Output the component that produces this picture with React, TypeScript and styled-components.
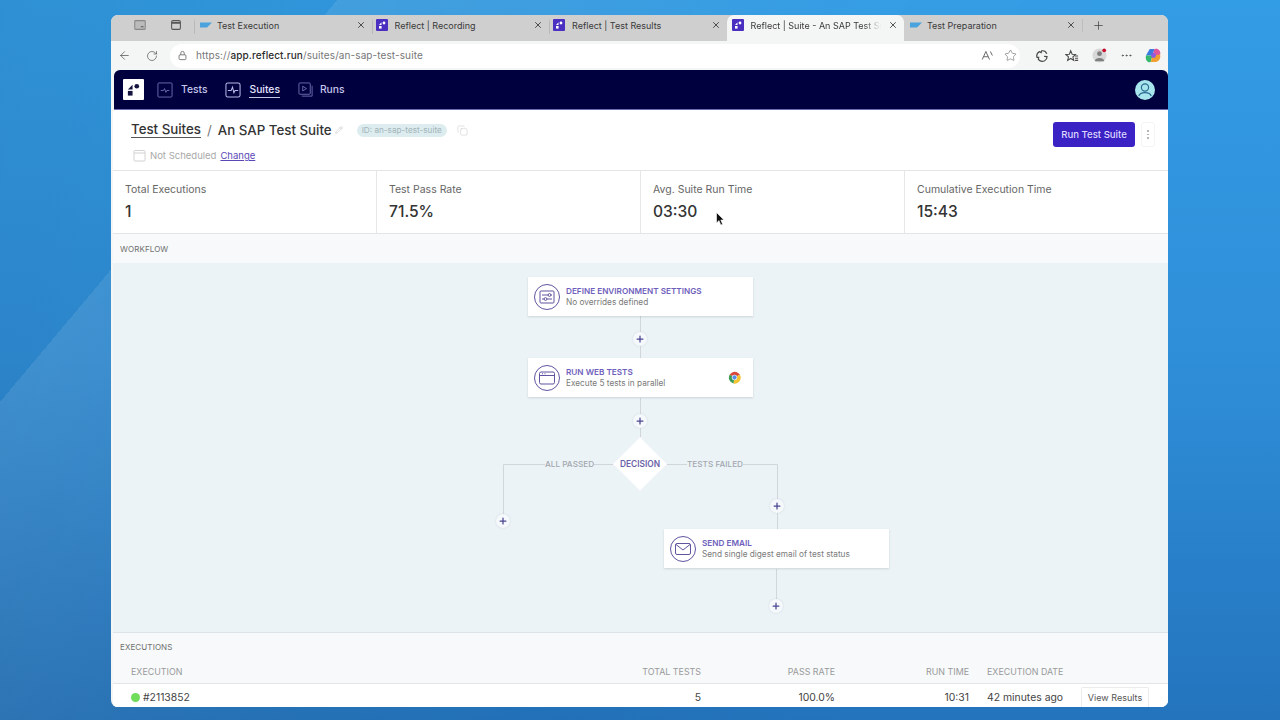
import React from 'react'

import { ArrowLeft, Copy, MoreHorizontal, Pencil, Plus, RotateCw, Star, X } from 'lucide-react'
import styled, { createGlobalStyle } from 'styled-components'

const GlobalStyle = createGlobalStyle`
  html, body {
    margin: 0;
    padding: 0;
    height: 100%;
    overflow: hidden;
    font-family: Inter, "Liberation Sans", sans-serif;
  }
`

const Desktop = styled.div`
  width: 1280px;
  height: 720px;
  box-sizing: border-box;
  padding: 15px 112px 13px 111px;
  background:
    linear-gradient(130deg, transparent 17.9%, rgba(255, 255, 255, 0.09) 17.9%, rgba(255, 255, 255, 0.02) 45%, transparent 60%),
    linear-gradient(90deg, rgba(0, 0, 0, 0.07), transparent 70%),
    linear-gradient(180deg, #329ce4 0%, #2f8ed8 50%, #2374bd 100%);
`

const Window = styled.div`
  height: 100%;
  display: flex;
  flex-direction: column;
  background: #f4f5f5;
  border-radius: 7px;
  overflow: hidden;
`

const TabBar = styled.div`
  height: 26px;
  flex: none;
  padding-left: 11px;
  display: flex;
  align-items: center;
  background: #cfcfcf;
`

const TabBarTool = styled.div`
  width: 36px;
  height: 26px;
  box-sizing: border-box;
  padding-bottom: 6px;
  flex: none;
  display: flex;
  align-items: center;
  justify-content: center;
  color: #555;
`

const Tab = styled.div<{ $active?: boolean; $sap?: boolean; $divider?: boolean }>`
  width: 177.5px;
  height: 26px;
  flex: none;
  box-sizing: border-box;
  padding: 0 6px 6px ${(p) => (p.$sap ? 6 : p.$active ? 5 : 4)}px;
  display: flex;
  align-items: center;
  gap: ${(p) => (p.$sap ? 5 : 7)}px;
  color: #3a3a3a;
  font-size: 9px;
  border-radius: 7px 7px 0 0;
  background-color: ${(p) => (p.$active ? '#f4f5f5' : 'transparent')};
  background-image: ${(p) => (p.$divider ? 'linear-gradient(#b9b9b9, #b9b9b9)' : 'none')};
  background-position: 0 2px;
  background-size: 1px 17px;
  background-repeat: no-repeat;
`

const TabTitle = styled.span<{ $fade?: boolean }>`
  flex: 1;
  min-width: 0;
  white-space: nowrap;
  overflow: hidden;
  mask-image: ${(p) => (p.$fade ? 'linear-gradient(90deg, #000 86%, transparent)' : 'none')};
`

const NewTab = styled.div`
  margin-bottom: 6px;
  padding-left: 9px;
  color: #444;
  display: flex;
  border-left: 1px solid #bdbdbd;
`

const Toolbar = styled.div`
  height: 29px;
  flex: none;
  display: flex;
  align-items: center;
  color: #4a4a4a;
`

const NavButton = styled.div`
  width: 27px;
  flex: none;
  display: flex;
  justify-content: center;
`

const AddressBox = styled.div`
  width: 850px;
  height: 24px;
  margin-left: 5px;
  flex: none;
  box-sizing: border-box;
  padding: 0 3px 0 7px;
  display: flex;
  align-items: center;
  gap: 8px;
  background: #fff;
  border-radius: 12px;
  color: #666;
`

const Url = styled.div`
  flex: 1;
  padding-bottom: 1px;
  font-size: 10px;
  color: #777;
  letter-spacing: 0.1px;

  b {
    font-weight: 500;
    color: #2b2b2b;
  }
`

const StarSlot = styled.span`
  display: flex;
  margin-left: 2px;
`

const ToolbarIcons = styled.div`
  display: flex;
  align-items: center;
  gap: 12.7px;
  padding-left: 15px;

  & > :first-child {
    margin-right: 3.7px;
  }
`

const AppBar = styled.div`
  height: 39px;
  flex: none;
  margin-left: 3px;
  padding: 0 13px 0 9px;
  display: flex;
  align-items: center;
  background: #00003f;
  border-radius: 6px 6px 0 0;
  border-bottom: 1px solid #6c6cb0;
`

const LogoTile = styled.div`
  width: 21px;
  height: 21px;
  margin-right: 13px;
  display: flex;
  align-items: center;
  justify-content: center;
  background: #fff;
  border-radius: 1px;
`

const NavItem = styled.div<{ $active?: boolean; $gap?: number }>`
  display: flex;
  align-items: center;
  gap: ${(p) => p.$gap ?? 8}px;
  margin-right: 18px;
  color: ${(p) => (p.$active ? '#e6e6ff' : '#c5c5ea')};
  font-size: 10.3px;
  font-weight: 500;

  span {
    border-bottom: 1px solid ${(p) => (p.$active ? '#c5c5ea' : 'transparent')};
    padding: 1px 0 2px;
  }
`

const AppBarEnd = styled.div`
  margin-left: auto;
  display: flex;
`

const Page = styled.div`
  position: relative;
  flex: 1;
  min-height: 0;
  margin-left: 2px;
  display: flex;
  flex-direction: column;
  background: #fff;
`

const SuiteHeader = styled.div`
  height: 61px;
  flex: none;
  box-sizing: border-box;
  padding: 10px 13px 0 18px;
  display: flex;
  justify-content: space-between;
  border-bottom: 1px solid #e3e5e6;
`

const TitleRow = styled.div`
  height: 20px;
  display: flex;
  align-items: center;
  font-size: 13.3px;
  font-weight: 500;
  color: #333;
`

const Crumb = styled.span`
  border-bottom: 1px solid #555;
  line-height: 15px;
`

const Slash = styled.span`
  margin: 0 6px;
  color: #777;
  font-weight: 400;
`

const EditIcon = styled.span`
  margin: 0 14px 0 3px;
  display: flex;
  color: #ccc;
`

const IdChip = styled.span`
  height: 13px;
  padding: 0 5px;
  display: flex;
  align-items: center;
  background: #dcecef;
  color: #a3b4b9;
  font-size: 8.2px;
  font-weight: 400;
  border-radius: 7px;
  margin-right: 10px;
`

const CopyIcon = styled.span`
  display: flex;
  color: #c9c9c9;
`

const ScheduleRow = styled.div`
  margin-top: 9px;
  padding-left: 2px;
  display: flex;
  align-items: center;
  gap: 4px;
  color: #a9a9a9;
  font-size: 9.5px;
`

const ChangeLink = styled.a`
  color: #5a48b8;
  text-decoration: underline;
`

const HeaderActions = styled.div`
  display: flex;
  gap: 6px;
  padding-top: 2px;
`

const RunButton = styled.button`
  width: 82px;
  height: 25px;
  padding: 0;
  border: 0;
  border-radius: 3px;
  background: #3a22c4;
  color: #ded8ff;
  font-family: inherit;
  font-size: 9.6px;
  font-weight: 500;
`

const KebabButton = styled.div`
  width: 14px;
  height: 25px;
  display: flex;
  flex-direction: column;
  align-items: center;
  justify-content: center;
  gap: 2px;
  border: 1px solid #f4f4f4;
  box-sizing: border-box;
  border-radius: 3px;

  i {
    width: 1.5px;
    height: 1.5px;
    background: #a8a8a8;
    border-radius: 50%;
  }
`

const StatsGrid = styled.div`
  height: 63px;
  flex: none;
  display: grid;
  grid-template-columns: repeat(4, 264px);
  border-bottom: 1px solid #e3e5e6;
  box-sizing: border-box;
`

const Stat = styled.div`
  box-sizing: border-box;
  padding: 12px 12px 0;
  border-right: 1px solid #e6e6e6;

  &:last-child {
    border-right: 0;
  }
`

const StatLabel = styled.div`
  font-size: 10.5px;
  line-height: 13px;
  color: #666;
`

const StatValue = styled.div`
  margin-top: 6px;
  font-size: 15.6px;
  line-height: 19px;
  font-weight: 500;
  color: #333;
`

const SectionLabel = styled.div<{ $h: number; $top?: number }>`
  height: ${(p) => p.$h}px;
  flex: none;
  box-sizing: border-box;
  padding: ${(p) => p.$top ?? 0}px 0 0 7px;
  display: flex;
  align-items: center;
  background: #f7f9fa;
  color: #707070;
  font-size: 8px;
  letter-spacing: 0.1px;
`

const Canvas = styled.div`
  position: relative;
  height: 370px;
  flex: none;
  background: #ebf3f6;
  border-bottom: 1px solid #dde3e6;
  box-sizing: border-box;
`

const Wires = styled.svg`
  position: absolute;
  left: 0;
  top: 0;
`

const NodeCard = styled.div<{ $x: number; $y: number }>`
  position: absolute;
  left: ${(p) => p.$x}px;
  top: ${(p) => p.$y}px;
  width: 225px;
  height: 39px;
  box-sizing: border-box;
  padding: 0 6px;
  display: flex;
  align-items: center;
  gap: 6px;
  background: #fff;
  box-shadow: 0 1px 2px rgba(70, 80, 100, 0.18);
`

const NodeRing = styled.div`
  width: 26px;
  height: 26px;
  flex: none;
  box-sizing: border-box;
  display: flex;
  align-items: center;
  justify-content: center;
  border: 1.3px solid #5f55a0;
  border-radius: 50%;
  color: #5f55a0;
`

const NodeText = styled.div`
  flex: 1;
`

const NodeTitle = styled.div`
  font-size: 8.2px;
  line-height: 11px;
  font-weight: 600;
  color: #6f5fbc;
`

const NodeSub = styled.div`
  font-size: 8.25px;
  line-height: 11px;
  color: #7a7a7a;
`

const NodeBadge = styled.div`
  display: flex;
  margin-right: 6px;
`

const AddButton = styled.div<{ $x: number; $y: number }>`
  position: absolute;
  left: ${(p) => p.$x - 7}px;
  top: ${(p) => p.$y - 7}px;
  width: 14px;
  height: 14px;
  display: flex;
  align-items: center;
  justify-content: center;
  background: #f5f9fb;
  border-radius: 50%;
  box-shadow: 0 0 2px rgba(120, 130, 160, 0.25);
  color: #4a4590;
`

const Diamond = styled.div`
  position: absolute;
  left: 508px;
  top: 182px;
  width: 38px;
  height: 38px;
  background: #fff;
  transform: rotate(45deg);
`

const DecisionLabel = styled.div`
  position: absolute;
  left: 487px;
  top: 195px;
  width: 80px;
  text-align: center;
  font-size: 8.4px;
  line-height: 12px;
  font-weight: 600;
  color: #6a62a8;
`

const BranchLabel = styled.div<{ $x: number }>`
  position: absolute;
  left: ${(p) => p.$x}px;
  top: 195px;
  font-size: 8.2px;
  line-height: 12px;
  font-weight: 500;
  color: #a3a7af;
  white-space: nowrap;
`

const TableRow = styled.div<{ $head?: boolean }>`
  height: 23px;
  flex: none;
  box-sizing: border-box;
  padding: ${(p) => (p.$head ? '0 0 1px' : '3px 0 0')};
  display: grid;
  grid-template-columns: 18px 436px 134px 134px 134px 18px 94px 68px;
  align-items: center;
  font-size: ${(p) => (p.$head ? 8.9 : 10.4)}px;
  color: ${(p) => (p.$head ? '#9a9a9a' : '#444')};
  background: ${(p) => (p.$head ? '#f7f9fa' : '#fff')};
  border-bottom: ${(p) => (p.$head ? '1px solid #e3e6e8' : '0')};
  overflow: hidden;
`

const Cell = styled.div<{ $right?: boolean }>`
  text-align: ${(p) => (p.$right ? 'right' : 'left')};
  white-space: nowrap;
`

const ExecutionCell = styled.div`
  display: flex;
  align-items: center;
  gap: 3px;
`

const StatusDot = styled.span`
  width: 9px;
  height: 9px;
  background: #6fdc5a;
  border-radius: 50%;
`

const ViewResults = styled.div`
  align-self: stretch;
  box-sizing: border-box;
  display: flex;
  align-items: center;
  justify-content: center;
  border: 1px solid #ececec;
  border-bottom: 0;
  border-radius: 2px 2px 0 0;
  font-size: 9px;
  color: #555;
`

const Cursor = styled.svg`
  position: absolute;
  left: 603px;
  top: 102px;
`

const ReflectMark = ({ size, color }: { size: number; color: string }) => (
  <svg width={size} height={size} viewBox="0 0 16 16" fill={color}>
    <path d="M2 8 L7 3 V8 Z" />
    <circle cx="11.5" cy="4.5" r="2.5" />
    <rect x="2" y="9.5" width="5" height="5" />
  </svg>
)

const ReflectFavicon = () => (
  <svg width="12" height="12" viewBox="0 0 12 12" style={{ flex: 'none' }}>
    <rect width="12" height="12" rx="1" fill="#4a2fc0" />
    <path d="M3 6 L5.5 3.3 V6 Z" fill="#fff" />
    <circle cx="8" cy="4" r="1.4" fill="#fff" />
    <rect x="3" y="7" width="2.6" height="2.6" fill="#fff" />
  </svg>
)

const SapFavicon = () => (
  <svg width="12" height="12" viewBox="0 0 12 12" style={{ flex: 'none' }}>
    <path d="M0 3.5 H12 L7 8.5 H0 Z" fill="#4aa3dc" />
  </svg>
)

const ChromeIcon = () => (
  <svg width="13" height="13" viewBox="0 0 24 24">
    <path d="M12 12 L3 7 A11 11 0 0 1 22 7 Z" fill="#d9483b" />
    <path d="M12 12 L22 7 A11 11 0 0 1 10 23 Z" fill="#f4c430" />
    <path d="M12 12 L10 23 A11 11 0 0 1 3 7 Z" fill="#3a9b56" />
    <circle cx="12" cy="12" r="5" fill="#fff" />
    <circle cx="12" cy="12" r="4" fill="#5a8fe6" />
  </svg>
)

const CopilotIcon = () => (
  <svg width="17" height="17" viewBox="0 0 18 18">
    <path d="M5 2 H10 L8 9 H1 Z" fill="#3a7be0" />
    <path d="M10 2 C14 1 17 4 16 8 L12 10 L8 9 Z" fill="#e0569a" />
    <path d="M1 9 H8 L6 16 C3 17 0 14 1 9 Z" fill="#37b86f" />
    <path d="M8 9 L16 8 C17 13 14 16 10 16 H6 Z" fill="#f0a030" />
    <circle cx="9" cy="9" r="2.6" fill="#8a5ce0" />
  </svg>
)

const ToolIcon = ({ children, size = 14 }: { children: React.ReactNode; size?: number }) => (
  <svg width={size} height={size} viewBox="0 0 16 16" fill="none" stroke="currentColor" strokeWidth="1.2">
    {children}
  </svg>
)

const tabs = [
  { title: 'Test Execution', sap: true, divider: true },
  { title: 'Reflect | Recording', divider: true },
  { title: 'Reflect | Test Results', divider: true },
  { title: 'Reflect | Suite - An SAP Test Suite', active: true },
  { title: 'Test Preparation', sap: true },
]

const stats = [
  { label: 'Total Executions', value: '1' },
  { label: 'Test Pass Rate', value: '71.5%' },
  { label: 'Avg. Suite Run Time', value: '03:30' },
  { label: 'Cumulative Execution Time', value: '15:43' },
]

const addButtons = [
  { x: 527, y: 76 },
  { x: 527, y: 158 },
  { x: 390, y: 258 },
  { x: 664, y: 243 },
  { x: 663, y: 343 },
]

export default function App() {
  return (
    <Desktop>
      <GlobalStyle />
      <Window>
        <TabBar>
          <TabBarTool>
            <ToolIcon>
              <rect x="2" y="3" width="12" height="10" rx="1" fill="#bbb" stroke="#888" />
              <path d="M9 10 H12" stroke="#555" />
            </ToolIcon>
          </TabBarTool>
          <TabBarTool>
            <ToolIcon>
              <rect x="3" y="3" width="10" height="10" rx="1.5" />
              <path d="M3 5.5 H13" strokeWidth="2" />
            </ToolIcon>
          </TabBarTool>
          {tabs.map((tab) => (
            <Tab key={tab.title} $active={tab.active} $sap={tab.sap} $divider={tab.divider}>
              {tab.sap ? <SapFavicon /> : <ReflectFavicon />}
              <TabTitle $fade={tab.active}>{tab.title}</TabTitle>
              <X size={10} color="#333" />
            </Tab>
          ))}
          <NewTab>
            <Plus size={13} strokeWidth={1.4} />
          </NewTab>
        </TabBar>

        <Toolbar>
          <NavButton>
            <ArrowLeft size={13} strokeWidth={1.3} />
          </NavButton>
          <NavButton>
            <RotateCw size={12} strokeWidth={1.3} />
          </NavButton>
          <AddressBox>
            <ToolIcon size={11}>
              <rect x="3" y="7" width="10" height="7" rx="1.5" />
              <path d="M5.5 7 V4.5 A2.5 2.5 0 0 1 10.5 4.5 V7" />
            </ToolIcon>
            <Url>
              https://<b>app.reflect.run</b>/suites/an-sap-test-suite
            </Url>
            <ToolIcon size={13}>
              <path d="M1.5 13 L6 3 L10.5 13 M3.3 9.5 H8.7 M11.5 3 L14 8" />
            </ToolIcon>
            <StarSlot>
              <Star size={13} strokeWidth={1.1} />
            </StarSlot>
          </AddressBox>
          <ToolbarIcons>
            <ToolIcon>
              <path
                d="M13.5 5.5 C12.5 3 10 1.6 7.5 2.2 L7 4 L5 3 C2.6 4.4 1.5 7 2.3 9.6 L4.2 9.6 L3.8 11.8 C5.6 14 8.6 14.6 11 13.4 C12.8 12.4 13.8 10.6 13.8 8.6 L10.4 8.4"
                strokeWidth="1.4"
              />
            </ToolIcon>
            <ToolIcon>
              <path d="M6.5 2 L8.2 6 L12 6.3 L9 9 L10 13 L6.5 10.8 L3 13 L4 9 L1 6.3 L5 6 Z" />
              <path d="M11 8 H15 M11.5 10.5 H15 M11.5 13 H15" />
            </ToolIcon>
            <svg width="15" height="15" viewBox="0 0 16 16">
              <circle cx="8" cy="8" r="7.5" fill="#d8d8d8" />
              <circle cx="8" cy="6" r="2.6" fill="#808080" />
              <path d="M3 14 C3 9.5 13 9.5 13 14 Z" fill="#808080" />
              <circle cx="13" cy="2.5" r="2" fill="#c8102e" />
            </svg>
            <MoreHorizontal size={13} strokeWidth={1.5} />
            <CopilotIcon />
          </ToolbarIcons>
        </Toolbar>

        <AppBar>
          <LogoTile>
            <ReflectMark size={15} color="#14143f" />
          </LogoTile>
          <NavItem>
            <svg width="16" height="16" viewBox="0 0 17 17" fill="none" stroke="#6c6cb0" strokeWidth="1">
              <rect x="1" y="1" width="15" height="15" rx="1" />
              <path d="M4 9 H7 L8 7 L9.5 11 L10.5 9 H13" />
            </svg>
            <span>Tests</span>
          </NavItem>
          <NavItem $active>
            <svg width="16" height="16" viewBox="0 0 17 17" fill="none" stroke="#b9b9e8" strokeWidth="1.1">
              <rect x="1" y="1" width="15" height="15" rx="2" />
              <path d="M3 9 H6.5 L8 5.5 L9.5 11.5 L10.7 9 H14" />
            </svg>
            <span>Suites</span>
          </NavItem>
          <NavItem $gap={6}>
            <svg width="16" height="16" viewBox="0 0 17 17" fill="none" stroke="#6c6cb0" strokeWidth="1">
              <rect x="1" y="1" width="12" height="12" rx="1" />
              <path d="M15 4 V15 H4" />
              <path d="M5 4.5 L9 7 L5 9.5 Z" />
            </svg>
            <span>Runs</span>
          </NavItem>
          <AppBarEnd>
            <svg width="20" height="20" viewBox="0 0 20 20" fill="none">
              <circle cx="10" cy="10" r="10" fill="#a8e6ee" />
              <circle cx="10" cy="7.5" r="3.6" stroke="#2a6a8f" strokeWidth="1.2" />
              <path d="M3.8 16 C5 11.5 15 11.5 16.2 16" stroke="#2a6a8f" strokeWidth="1.2" />
            </svg>
          </AppBarEnd>
        </AppBar>

        <Page>
          <SuiteHeader>
            <div>
              <TitleRow>
                <Crumb>Test Suites</Crumb>
                <Slash>/</Slash>
                <span>An SAP Test Suite</span>
                <EditIcon>
                  <Pencil size={8} />
                </EditIcon>
                <IdChip>ID: an-sap-test-suite</IdChip>
                <CopyIcon>
                  <Copy size={11} strokeWidth={1.1} />
                </CopyIcon>
              </TitleRow>
              <ScheduleRow>
                <svg width="13" height="13" viewBox="0 0 13 13" fill="none" stroke="#d2d2d2">
                  <rect x="1" y="1.5" width="11" height="10.5" rx="1" />
                  <path d="M1 4 H12" />
                </svg>
                <span>Not Scheduled</span>
                <ChangeLink>Change</ChangeLink>
              </ScheduleRow>
            </div>
            <HeaderActions>
              <RunButton>Run Test Suite</RunButton>
              <KebabButton>
                <i />
                <i />
                <i />
              </KebabButton>
            </HeaderActions>
          </SuiteHeader>

          <StatsGrid>
            {stats.map((stat) => (
              <Stat key={stat.label}>
                <StatLabel>{stat.label}</StatLabel>
                <StatValue>{stat.value}</StatValue>
              </Stat>
            ))}
          </StatsGrid>

          <SectionLabel $h={29} $top={1}>
            WORKFLOW
          </SectionLabel>

          <Canvas>
            <Wires width="1055" height="369" fill="none" stroke="#d0d6da" strokeWidth="1">
              <path d="M527.5 53 V95 M527.5 135 V174" />
              <path d="M390.5 258 V201.5 H432 M481 201.5 H500" />
              <path d="M554 201.5 H574 M630 201.5 H664.5 V266 M663.5 306 V343" />
            </Wires>

            <NodeCard $x={415} $y={14}>
              <NodeRing>
                <svg width="18" height="18" viewBox="0 0 18 18" fill="none" stroke="currentColor" strokeWidth="1">
                  <rect x="2" y="3" width="14" height="12" rx="1" />
                  <path d="M4 7 H10 M13 7 H14 M4 11 H6 M9 11 H14" />
                  <circle cx="11.5" cy="7" r="1.4" />
                  <circle cx="7.5" cy="11" r="1.4" />
                </svg>
              </NodeRing>
              <NodeText>
                <NodeTitle>DEFINE ENVIRONMENT SETTINGS</NodeTitle>
                <NodeSub>No overrides defined</NodeSub>
              </NodeText>
            </NodeCard>

            <NodeCard $x={415} $y={95}>
              <NodeRing>
                <svg width="18" height="18" viewBox="0 0 18 18" fill="none" stroke="currentColor" strokeWidth="1">
                  <rect x="1.5" y="3" width="15" height="12" rx="1.5" />
                  <path d="M1.5 6.5 H16.5 M4 4.8 H5 M6.5 4.8 H7.5" />
                </svg>
              </NodeRing>
              <NodeText>
                <NodeTitle>RUN WEB TESTS</NodeTitle>
                <NodeSub>Execute 5 tests in parallel</NodeSub>
              </NodeText>
              <NodeBadge>
                <ChromeIcon />
              </NodeBadge>
            </NodeCard>

            <NodeCard $x={551} $y={266}>
              <NodeRing>
                <svg width="18" height="18" viewBox="0 0 18 18" fill="none" stroke="currentColor" strokeWidth="1">
                  <rect x="1.5" y="3.5" width="15" height="11" rx="1.5" />
                  <path d="M2 4.5 L9 10 L16 4.5" />
                </svg>
              </NodeRing>
              <NodeText>
                <NodeTitle>SEND EMAIL</NodeTitle>
                <NodeSub>Send single digest email of test status</NodeSub>
              </NodeText>
            </NodeCard>

            <Diamond />
            <DecisionLabel>DECISION</DecisionLabel>
            <BranchLabel $x={432}>ALL PASSED</BranchLabel>
            <BranchLabel $x={574}>TESTS FAILED</BranchLabel>

            {addButtons.map((b) => (
              <AddButton key={`${b.x}-${b.y}`} $x={b.x} $y={b.y}>
                <Plus size={10} strokeWidth={3} />
              </AddButton>
            ))}
          </Canvas>

          <SectionLabel $h={28}>EXECUTIONS</SectionLabel>

          <TableRow $head>
            <span />
            <Cell>EXECUTION</Cell>
            <Cell $right>TOTAL TESTS</Cell>
            <Cell $right>PASS RATE</Cell>
            <Cell $right>RUN TIME</Cell>
            <span />
            <Cell>EXECUTION DATE</Cell>
            <span />
          </TableRow>
          <TableRow>
            <span />
            <ExecutionCell>
              <StatusDot />
              #2113852
            </ExecutionCell>
            <Cell $right>5</Cell>
            <Cell $right>100.0%</Cell>
            <Cell $right>10:31</Cell>
            <span />
            <Cell>42 minutes ago</Cell>
            <ViewResults>View Results</ViewResults>
          </TableRow>

          <Cursor width="9" height="14" viewBox="0 0 9 14">
            <path d="M0.5 0.5 V11 L3 8.6 L4.8 13 L6.6 12.2 L4.8 8 H8 Z" fill="#111" stroke="#fff" strokeWidth="0.6" />
          </Cursor>
        </Page>
      </Window>
    </Desktop>
  )
}
